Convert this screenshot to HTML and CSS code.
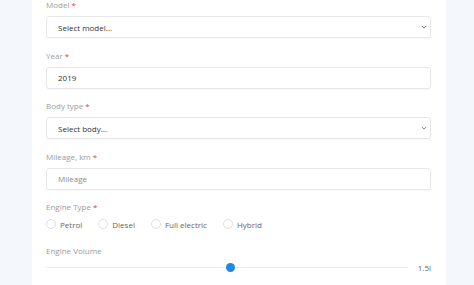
FILE: index.html
```html
<!DOCTYPE html>
<html lang="en">
<head>
    <meta charset="UTF-8">
    <meta name="viewport" content="width=device-width, initial-scale=1.0">
    <title>Sell your car</title>
    <link rel="stylesheet" href="styles.css">
</head>
<body>
    <form class="card">
        <div class="field">
            <label class="label" for="model">Model <span class="req">*</span></label>
            <div class="select-wrap">
                <select id="model" class="control">
                    <option>Select model...</option>
                </select>
                <svg class="chevron" viewBox="0 0 8 5" width="6" height="4"><path d="M1 1l3 3 3-3" fill="none" stroke="#666" stroke-width="1.1"/></svg>
            </div>
        </div>

        <div class="field">
            <label class="label" for="year">Year <span class="req">*</span></label>
            <input id="year" class="control" type="text" value="2019">
        </div>

        <div class="field">
            <label class="label" for="body">Body type <span class="req">*</span></label>
            <div class="select-wrap">
                <select id="body" class="control">
                    <option>Select body...</option>
                </select>
                <svg class="chevron" viewBox="0 0 8 5" width="6" height="4"><path d="M1 1l3 3 3-3" fill="none" stroke="#666" stroke-width="1.1"/></svg>
            </div>
        </div>

        <div class="field">
            <label class="label" for="mileage">Mileage, km <span class="req">*</span></label>
            <input id="mileage" class="control" type="text" placeholder="Mileage">
        </div>

        <div class="field field-radios">
            <div class="label">Engine Type <span class="req">*</span></div>
            <div class="radios">
                <label class="radio"><input type="radio" name="engine"> Petrol</label>
                <label class="radio"><input type="radio" name="engine"> Diesel</label>
                <label class="radio"><input type="radio" name="engine"> Full electric</label>
                <label class="radio"><input type="radio" name="engine"> Hybrid</label>
            </div>
        </div>

        <div class="field">
            <div class="label">Engine Volume</div>
            <div class="range-row">
                <input id="volume" class="range" type="range" min="0" max="3" step="0.01" value="1.53">
                <span class="range-value">1.5l</span>
            </div>
        </div>
    </form>
</body>
</html>
```

FILE: styles.css
```css
body {
    margin: 0;
    background-color: #f4f8fc;
    font-family: "Open Sans", Arial, sans-serif;
    font-size: 8px;
    color: #333;
}

.card {
    width: 414px;
    margin-left: 32px;
    padding: 0 15px 2px 14px;
    box-sizing: border-box;
    background-color: #fff;
}

.field {
    margin-bottom: 12.5px;
}

.field-radios {
    margin-bottom: 15.5px;
}

.label {
    display: block;
    line-height: 10px;
    margin-bottom: 6px;
    color: #9b9b9b;
}

.req {
    color: #e53935;
}

.control {
    display: block;
    width: 100%;
    height: 22px;
    box-sizing: border-box;
    margin: 0;
    padding: 0 11px;
    border: 1px solid #e7e7e7;
    border-radius: 3px;
    background-color: #fff;
    box-shadow: 0 1px 2px rgba(0, 0, 0, 0.04);
    font-family: inherit;
    font-size: 8px;
    color: #333;
    outline: none;
}

.control::placeholder {
    color: #8a8a8a;
}

select.control {
    -webkit-appearance: none;
    appearance: none;
}

.select-wrap {
    position: relative;
}

.chevron {
    position: absolute;
    right: 4px;
    top: 9px;
}

.radios {
    display: flex;
    align-items: center;
    gap: 16px;
    height: 12px;
}

.radio {
    display: flex;
    align-items: center;
    gap: 4px;
    color: #666;
}

.radio input {
    -webkit-appearance: none;
    appearance: none;
    width: 10px;
    height: 10px;
    margin: 0;
    border: 1px solid #e0e0e0;
    border-radius: 50%;
    background-color: #fff;
}

.range-row {
    display: flex;
    align-items: center;
    gap: 10px;
    height: 12px;
    margin-top: 5px;
}

.range {
    -webkit-appearance: none;
    appearance: none;
    flex: 1;
    height: 10px;
    margin: 0;
    background: transparent;
}

.range::-webkit-slider-runnable-track {
    height: 1px;
    background-color: #ececec;
}

.range::-webkit-slider-thumb {
    -webkit-appearance: none;
    width: 9px;
    height: 9px;
    margin-top: -4px;
    border-radius: 50%;
    background-color: #1e88e5;
}

.range-value {
    color: #666;
}
```
